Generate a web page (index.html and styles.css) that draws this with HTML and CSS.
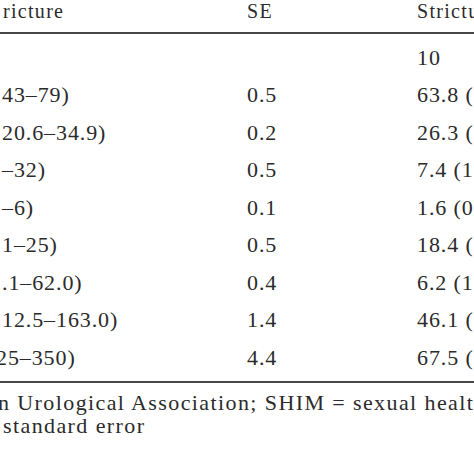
FILE: index.html
```html
<!DOCTYPE html>
<html>
<head>
<meta charset="utf-8">
<link rel="stylesheet" href="styles.css">
</head>
<body>
<div class="table">
  <div class="thead">
    <span class="cell first">ricture</span>
    <span class="cell">SE</span>
    <span class="cell">Stricture</span>
  </div>
  <div class="tbody">
    <span class="cell first"></span><span class="cell"></span><span class="cell">10</span>
    <span class="cell first">43–79)</span><span class="cell">0.5</span><span class="cell">63.8 (</span>
    <span class="cell first">20.6–34.9)</span><span class="cell">0.2</span><span class="cell">26.3 (</span>
    <span class="cell first">–32)</span><span class="cell">0.5</span><span class="cell">7.4 (1</span>
    <span class="cell first">–6)</span><span class="cell">0.1</span><span class="cell">1.6 (0</span>
    <span class="cell first">1–25)</span><span class="cell">0.5</span><span class="cell">18.4 (</span>
    <span class="cell first">.1–62.0)</span><span class="cell">0.4</span><span class="cell">6.2 (1</span>
    <span class="cell first">12.5–163.0)</span><span class="cell">1.4</span><span class="cell">46.1 (</span>
    <span class="cell first shift">25–350)</span><span class="cell">4.4</span><span class="cell">67.5 (</span>
  </div>
</div>
<div class="note">
  <div class="note-line one">n Urological Association; SHIM = sexual healt</div>
  <div class="note-line two">standard error</div>
</div>
</body>
</html>
```
FILE: styles.css
```css
html, body {
  margin: 0;
  padding: 0;
}
body {
  width: 474px;
  height: 474px;
  overflow: hidden;
  background: #ffffff;
  color: #2b2b2b;
  font-family: "Liberation Serif", "Times New Roman", serif;
}
.thead,
.tbody {
  display: grid;
  grid-template-columns: 245px 170px minmax(0, 1fr);
  white-space: nowrap;
  border-bottom: 2px solid #474747;
}
.thead {
  padding: 1px 0 11px 2px;
  font-size: 20px;
  line-height: 20px;
  letter-spacing: 1.3px;
}
.thead .first {
  padding-left: 1px;
}
.tbody {
  padding: 4.6px 0 4.9px 2px;
  font-size: 22px;
  line-height: 37.5px;
  letter-spacing: 0.9px;
}
.cell {
  display: block;
  overflow: visible;
}
.shift {
  margin-left: -6px;
}
.note {
  margin-top: 8px;
  font-size: 22px;
  line-height: 23px;
  letter-spacing: 1.4px;
  white-space: nowrap;
}
.note-line.one {
  margin-left: -2px;
}
.note-line.two {
  margin-left: 3px;
}
```
